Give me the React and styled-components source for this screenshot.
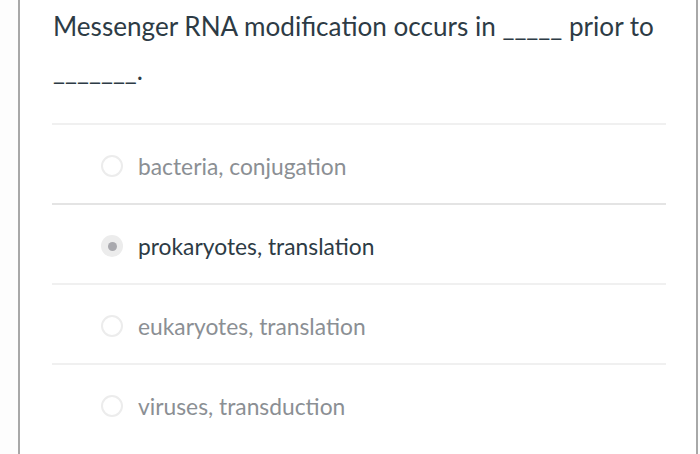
import React from 'react'
import styled, { createGlobalStyle } from 'styled-components'

const GlobalStyle = createGlobalStyle`
  html, body {
    margin: 0;
    padding: 0;
    background: #ffffff;
  }
  body {
    font-family: Lato, "Liberation Sans", sans-serif;
    color: #2d3b45;
  }
`

const Page = styled.div({
  width: '700px',
  height: '454px',
  overflow: 'hidden',
  display: 'flex',
  flexDirection: 'row',
  background: '#fdfdfd',
})

const Card = styled.div({
  marginLeft: '18px',
  width: '680px',
  height: '100%',
  borderLeft: '2px solid #a8a8a8',
  borderRight: '2px solid #a8a8a8',
  background: '#ffffff',
  display: 'flex',
  flexDirection: 'column',
  padding: '0 30px 0 32px',
  boxSizing: 'border-box',
})

const Question = styled.div({
  fontSize: '26.1px',
  lineHeight: '44px',
  color: '#2d3b45',
  padding: '4px 0 0 1px',
  height: '123px',
  boxSizing: 'border-box',
  whiteSpace: 'nowrap',
})

const Answers = styled.div({
  display: 'flex',
  flexDirection: 'column',
})

const Row = styled.div(({ strong }) => ({
  height: '80px',
  borderTop: `2px solid ${strong ? '#e4e4e4' : '#f0f0f0'}`,
  display: 'flex',
  alignItems: 'center',
  paddingLeft: '49px',
  paddingTop: '4px',
  boxSizing: 'border-box',
  gap: '15px',
}))

const Radio = styled.span(({ checked }) => ({
  width: '22px',
  height: '22px',
  borderRadius: '50%',
  boxSizing: 'border-box',
  border: checked ? 'none' : '2px solid #ececec',
  background: checked ? '#ececec' : '#ffffff',
  display: 'flex',
  alignItems: 'center',
  justifyContent: 'center',
  flex: '0 0 auto',
  '&::after': checked
    ? {
        content: '""',
        width: '9px',
        height: '9px',
        borderRadius: '50%',
        background: '#a9a9ae',
      }
    : {},
}))

const Label = styled.span(({ checked }) => ({
  fontSize: '22.8px',
  color: checked ? '#2d3b45' : '#8b8f94',
}))

const answers = [
  { text: 'bacteria, conjugation' },
  { text: 'prokaryotes, translation', checked: true },
  { text: 'eukaryotes, translation' },
  { text: 'viruses, transduction' },
]

export default function App() {
  return (
    <>
      <GlobalStyle />
      <Page>
        <Card>
          <Question>
            Messenger RNA modification occurs in _____ prior to
            <br />
            _______.
          </Question>
          <Answers>
            {answers.map((a, i) => (
              <Row key={a.text} strong={i === 1}>
                <Radio checked={a.checked} />
                <Label checked={a.checked}>{a.text}</Label>
              </Row>
            ))}
          </Answers>
        </Card>
      </Page>
    </>
  )
}
